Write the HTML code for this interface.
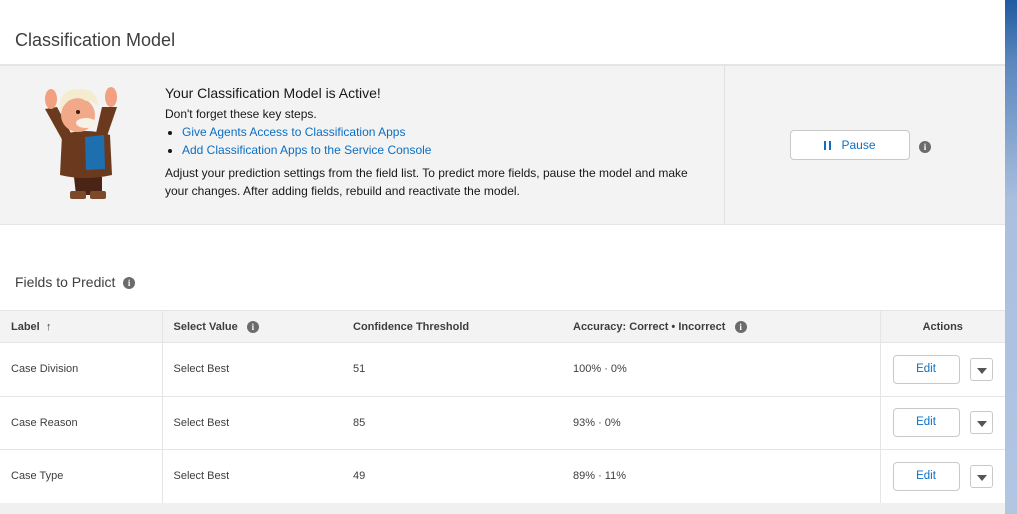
<!DOCTYPE html>
<html><head><meta charset="utf-8"><style>
*{box-sizing:border-box;margin:0;padding:0}
body{width:1017px;height:514px;overflow:hidden;background:#fff;font-family:"Liberation Sans",sans-serif;color:#3e3e3c;position:relative}
.strip{position:absolute;left:1005px;top:0;width:12px;height:514px;background:linear-gradient(#1f5aa0 0,#5a86bd 60px,#a9bfdd 200px,#b2c6e2 514px)}
h1{position:absolute;left:15px;top:30px;font-size:18px;font-weight:normal;color:#3e3e3c}
.panel{position:absolute;left:0;top:64px;width:1005px;height:161px;background:#f3f3f3;border-top:2px solid #e5e5e5;border-bottom:1px solid #e5e5e5}
.div{position:absolute;left:724px;top:0;width:1px;height:100%;background:#e0e0e0}
.txt{position:absolute;left:165px;top:18px;font-size:12px;line-height:18px;color:#181818}
.txt .t{font-size:14px;margin-bottom:3px}
.txt a{color:#0b6fc5;text-decoration:none}
.txt ul{margin-left:17px;list-style:disc}
.txt p.a{margin-top:5px}
.pause{position:absolute;left:790px;top:64px;width:120px;height:30px;background:#fff;border:1px solid #c9c9c9;border-radius:4px;color:#0b6fc5;font-size:12px;text-align:center;line-height:28px}
.bars{display:inline-block;width:7px;height:9px;border-left:2.5px solid #0b6fc5;border-right:2.5px solid #0b6fc5;vertical-align:-1px;margin-right:10px}
.info{display:inline-block;width:12px;height:12px;border-radius:50%;background:#6b6b6b;color:#fff;font-size:9px;line-height:12px;text-align:center;font-weight:bold;font-family:"Liberation Serif",serif}
h2{position:absolute;left:15px;top:274px;font-size:14px;font-weight:normal;color:#3e3e3c}
table{position:absolute;left:0;top:310px;width:1005px;border-collapse:collapse;font-size:11px}
th{background:#f3f3f3;height:32px;text-align:left;font-weight:bold;color:#3e3e3c;border-top:1px solid #e5e5e5;border-bottom:1px solid #e5e5e5;padding-left:11px}
td{height:53.5px;border-bottom:1px solid #e5e5e5;padding-left:11px;color:#3e3e3c}
.c1{border-right:1px solid #e5e5e5}
.c5{border-left:1px solid #e5e5e5}
.edit{display:inline-block;width:67px;height:29px;border:1px solid #c9c9c9;border-radius:4px;color:#0b6fc5;text-align:center;line-height:27px;font-size:11.5px;margin-left:1px;vertical-align:middle}
.dd{display:inline-block;width:23px;height:23px;border:1px solid #c9c9c9;border-radius:3px;margin-left:10px;vertical-align:middle;position:relative}
.dd:after{content:"";position:absolute;left:6px;top:9px;border-left:5px solid transparent;border-right:5px solid transparent;border-top:6px solid #555}
.scroll{position:absolute;left:0;top:503px;width:1005px;height:11px;background:#f0f0f0}
</style></head><body>
<div class="strip"></div>
<h1>Classification Model</h1>
<div class="panel">
<svg style="position:absolute;left:40px;top:11px" width="85" height="130" viewBox="0 0 85 130">
<path d="M5 32 L17 30 L32 58 L24 66 Z" fill="#6b3a1e"/>
<path d="M62 30 L77 30 L66 62 L56 56 Z" fill="#6b3a1e"/>
<ellipse cx="11" cy="22" rx="6" ry="10" fill="#f2a080"/>
<ellipse cx="71" cy="20" rx="6" ry="10" fill="#f2a080"/>
<path d="M34 100 L62 100 L62 118 L36 118 Z" fill="#4a2515"/>
<path d="M22 58 Q45 50 70 58 L72 98 Q45 104 20 98 Z" fill="#6b3a1e"/>
<path d="M45 60 L64 58 L65 92 L46 93 Z" fill="#1e6fb0"/>
<circle cx="38" cy="38" r="17" fill="#f2a98a"/>
<path d="M20 34 Q18 14 36 12 Q58 10 58 30 Q52 22 46 24 Q38 18 28 24 Q24 28 20 34Z" fill="#f5ecd0"/>
<ellipse cx="46" cy="46" rx="10" ry="5" fill="#f7f2e6"/>
<circle cx="38" cy="35" r="2" fill="#3a2010"/>
<rect x="30" y="114" width="16" height="8" rx="2" fill="#7a4a2a"/>
<rect x="50" y="114" width="16" height="8" rx="2" fill="#7a4a2a"/>
</svg>
<div class="txt">
<div class="t">Your Classification Model is Active!</div>
<div>Don't forget these key steps.</div>
<ul><li><a>Give Agents Access to Classification Apps</a></li><li><a>Add Classification Apps to the Service Console</a></li></ul>
<p class="a">Adjust your prediction settings from the field list. To predict more fields, pause the model and make<br>your changes. After adding fields, rebuild and reactivate the model.</p>
</div>
<div class="div"></div>
<div class="pause"><span class="bars"></span>Pause</div>
<span class="info" style="position:absolute;left:919px;top:75px">i</span>
</div>
<h2>Fields to Predict &nbsp;<span class="info" style="vertical-align:1px">i</span></h2>
<table>
<tr><th class="c1" style="width:162px">Label &nbsp;↑</th><th style="width:180px">Select Value &nbsp;&nbsp;<span class="info">i</span></th><th style="width:220px">Confidence Threshold</th><th>Accuracy: Correct • Incorrect &nbsp;&nbsp;<span class="info">i</span></th><th class="c5" style="width:125px;text-align:center;padding-left:0">Actions</th></tr>
<tr><td class="c1">Case Division</td><td>Select Best</td><td>51</td><td>100% · 0%</td><td class="c5"><span class="edit">Edit</span><span class="dd"></span></td></tr>
<tr><td class="c1">Case Reason</td><td>Select Best</td><td>85</td><td>93% · 0%</td><td class="c5"><span class="edit">Edit</span><span class="dd"></span></td></tr>
<tr><td class="c1">Case Type</td><td>Select Best</td><td>49</td><td>89% · 11%</td><td class="c5"><span class="edit">Edit</span><span class="dd"></span></td></tr>
</table>
<div class="scroll"></div>
</body></html>
